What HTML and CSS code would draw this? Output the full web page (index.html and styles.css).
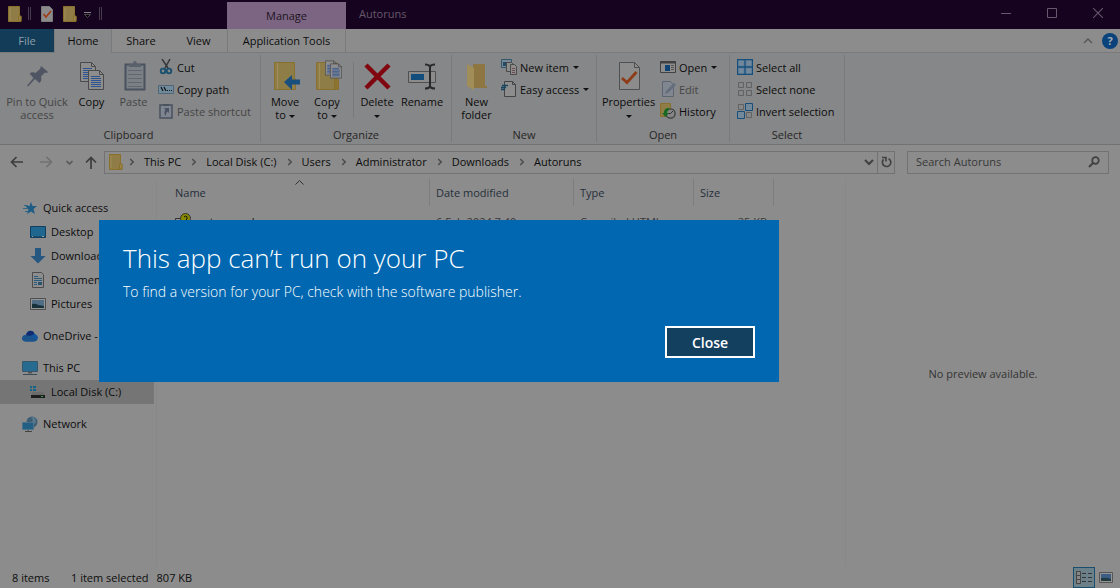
FILE: index.html
```html
<!DOCTYPE html>
<html lang="en">
<head>
<meta charset="utf-8">
<meta name="viewport" content="width=device-width, initial-scale=1">
<title>Autoruns</title>
<link rel="stylesheet" href="styles.css">
</head>
<body>
<svg class="defs" width="0" height="0" aria-hidden="true">
  <symbol id="folder" viewBox="0 0 14 16"><path d="M.5.5h11v10h1.500v5h-12.500z" fill="#8f7c46" stroke="#8a712b"/><path d="M10.500 15v-5h2.500v5z" fill="#9a854c" stroke="#8a712b"/><path d="M2 1.500v13" stroke="#a08d59"/></symbol>
  <symbol id="chev" viewBox="0 0 6 8"><path d="M1.200 1l3 3-3 3" fill="none" stroke="#4d4d4d" stroke-width="1.600"/></symbol>
  <symbol id="tri" viewBox="0 0 6 3"><path d="M0 0h6L3 3z" fill="#111"/></symbol>
  <symbol id="page" viewBox="0 0 16 20"><path d="M.5.5h11l4 4v15H.5z" fill="#8d8d8d" stroke="#4a4a4a"/><path d="M11.500.5v4h4" fill="none" stroke="#4a4a4a"/><path d="M3 6.500h9M3 8.500h10M3 10.500h10M3 12.500h10M3 14.500h10M3 16.500h10" stroke="#2c5290"/></symbol>
</svg>

<header class="titlebar">
  <div class="quick">
    <svg width="14" height="16"><use href="#folder"/></svg>
    <span class="grip"></span>
    <svg class="quick-props" width="12" height="16" viewBox="0 0 12 16"><path d="M.5.5h8l3 3v12H.5z" fill="#8b8b8b" stroke="#7b7b7b"/><path d="M2.500 8l2.500 3 5-6" fill="none" stroke="#a03c16" stroke-width="1.700"/></svg>
    <svg width="14" height="16"><use href="#folder"/></svg>
    <svg class="quick-more" width="7" height="6" viewBox="0 0 7 6"><path d="M0 .5h7" stroke="#858585"/><path d="M.5 2.500h6l-3 3z" fill="#000" stroke="#777" stroke-width=".6"/></svg>
    <span class="grip"></span>
  </div>
  <div class="manage">Manage</div>
  <h1 class="window-title">Autoruns</h1>
  <div class="window-controls">
    <button class="win" aria-label="Minimize"><svg width="10" height="10"><path d="M0 5.500h10" stroke="#68576c"/></svg></button>
    <button class="win" aria-label="Maximize"><svg width="10" height="10"><path d="M.5.5h9v9h-9z" fill="none" stroke="#68576c"/></svg></button>
    <button class="win" aria-label="Close window"><svg width="10" height="10"><path d="M0 0l10 10M10 0L0 10" stroke="#68576c" stroke-width="1.100"/></svg></button>
  </div>
</header>

<nav class="tabs" aria-label="Ribbon tabs">
  <button class="tab tab-file">File</button>
  <button class="tab tab-home">Home</button>
  <button class="tab tab-share">Share</button>
  <button class="tab tab-view">View</button>
  <button class="tab tab-app">Application Tools</button>
  <div class="tabs-end">
    <button class="bare" aria-label="Collapse ribbon"><svg width="10" height="6"><path d="M1 5l4-4 4 4" fill="none" stroke="#555" stroke-width="1.300"/></svg></button>
    <button class="help" aria-label="Help">?</button>
  </div>
</nav>

<section class="ribbon" aria-label="Home">
  <div class="group g-clipboard">
    <div class="tools">
      <button class="big b-pin off"><svg width="32" height="32"><path d="M20 6l7 6-1 1-2-.5-4 4c1 3 0 5-1.500 6.500l-4.500-4-6.500 7-1.500.5.500-1.500 6-7-4-4.500c2-1.500 4-1.500 6-.5l4.500-4z" fill="#4f5562"/></svg>Pin to Quick access</button>
      <button class="big b-copy"><svg width="32" height="32"><use href="#page" x="4" y="2" width="16" height="20"/><use href="#page" x="12" y="10" width="16" height="20"/></svg>Copy</button>
      <button class="big b-paste off"><svg width="32" height="32"><path d="M7.500 4.500h19v25h-19z" fill="#7b8087" stroke="#4a515f" stroke-width="2"/><path d="M10 10.500h14M10 14.500h14M10 18.500h14M10 22.500h14M10 26.500h14" stroke="#62676f"/><path d="M11 7V4h4c0-4 4-4 4 0h4v3z" fill="#5a616d"/></svg>Paste</button>
      <div class="small-col">
        <button class="small"><svg width="16" height="16"><path d="M4 0l6 9M12 0L6.500 10" stroke="#34383d" stroke-width="1.500"/><g fill="none" stroke="#18516f" stroke-width="1.800"><circle cx="5" cy="12" r="2.300"/><circle cx="11" cy="12" r="2.300"/></g></svg>Cut</button>
        <button class="small"><svg width="16" height="16"><path d="M.5 4.500h15v8H.5z" fill="#708b9c" stroke="#536575"/><path d="M3 6l2 4M6 6l2 4M9 9.500h1M11 9.500h1M13 9.500h1" stroke="#111" stroke-width="1.200"/></svg>Copy path</button>
        <button class="small off"><svg width="16" height="16"><path d="M2 2h12v13H2z" fill="#7f858e" stroke="#4a515f" stroke-width="1.500"/><path d="M5 3V1h6v2z" fill="#4a515f"/><path d="M6 5h5v5L9.500 8.500C8 10 8 11 8 13c-2-2-2-4-.5-6.500z" fill="#495265"/></svg>Paste shortcut</button>
      </div>
    </div>
    <h2 class="group-name">Clipboard</h2>
  </div>
  <div class="group g-organize">
    <div class="tools">
      <button class="big b-move"><svg width="32" height="32"><path d="M5.500 2.500h20v27h-20z" fill="#8f7d48" stroke="#89702c"/><path d="M8.500 3v26" stroke="#a08d59"/><path d="M22.500 19h4v10.500h-4z" fill="#927f49" stroke="#89702c"/><path d="M15 22l8-7v4.500h8v5h-8V30z" fill="#184f7c"/></svg><span>Move<br>to <svg width="6" height="3"><use href="#tri"/></svg></span></button>
      <button class="big b-move"><svg width="32" height="32"><path d="M5.500 2.500h20v27h-20z" fill="#8f7d48" stroke="#89702c"/><path d="M8.500 3v26" stroke="#a08d59"/><path d="M23.500 19h4v10.500h-4z" fill="#8c7430" stroke="#89702c"/><use href="#page" x="14" y="0" width="12" height="16"/><use href="#page" x="19" y="3" width="12" height="16"/></svg><span>Copy<br>to <svg width="6" height="3"><use href="#tri"/></svg></span></button>
      <span class="rule"></span>
      <button class="big b-move"><svg width="32" height="32"><path d="M5 5l23 23M28 5L5 28" stroke="#80060f" stroke-width="4.500"/></svg><span>Delete<br><svg width="6" height="3"><use href="#tri"/></svg></span></button>
      <button class="big b-rename"><svg width="32" height="32"><path d="M2.500 11.500h27v11h-27z" fill="#8b8b8b" stroke="#505050"/><path d="M5 14h13v6H5z" fill="#124d7c"/><path d="M24 5v23M19 4.500q4 0 5 2q1-2 5-2M19 28.500q4 0 5-2q1 2 5 2" fill="none" stroke="#292929" stroke-width="2"/></svg>Rename</button>
    </div>
    <h2 class="group-name">Organize</h2>
  </div>
  <div class="group g-new">
    <div class="tools">
      <button class="big b-new"><svg width="32" height="32"><path d="M12 4h12v22h2v2H12z" fill="#8d7642"/><path d="M6 4l7 4v22l-7-4z" fill="#a18d58"/></svg>New folder</button>
      <div class="small-col">
        <button class="small"><svg width="16" height="16"><path d="M.5.5h10v8H.5z" fill="#758a96" stroke="#34566a"/><path d="M2 3h4v4H2z" fill="#234a63"/><path d="M5.500 3.500h5l2 2v7h-7z" fill="#8d8d8d" stroke="#4a4a4a"/><path d="M9.500 5.500h4l2 2v8h-6z" fill="#8d8d8d" stroke="#4a4a4a"/><path d="M11 9.500h3M11 11.500h3M11 13.500h3" stroke="#6c4b52"/></svg>New item<svg class="drop" width="6" height="3"><use href="#tri"/></svg></button>
        <button class="small"><svg width="16" height="16"><path d="M3.500.5h8l3 3v12h-11z" fill="#8d8d8d" stroke="#444"/><path d="M11.500.5v3h3" fill="none" stroke="#444"/><path d="M1 4.500h6M0 6.500h5M0 8.500h4" stroke="#154360" stroke-width="1.400"/></svg>Easy access<svg class="drop" width="6" height="3"><use href="#tri"/></svg></button>
      </div>
    </div>
    <h2 class="group-name">New</h2>
  </div>
  <div class="group g-open">
    <div class="tools">
      <button class="big b-props"><svg width="32" height="32"><path d="M6.500 2.500h15l5 5v22h-20z" fill="#8c8c8c" stroke="#505050"/><path d="M21.500 2.500v5h5" fill="none" stroke="#505050"/><path d="M9 18l5 4.500L23.500 12" fill="none" stroke="#8e3b17" stroke-width="2.800"/></svg><span>Properties<br><svg width="6" height="3"><use href="#tri"/></svg></span></button>
      <div class="small-col">
        <button class="small"><svg width="16" height="16"><path d="M.5 2.500h15v11H.5z" fill="#8d8d8d" stroke="#414141"/><path d="M0 3.500h16" stroke="#414141" stroke-width="2"/><path d="M5 6h5v6H5z" fill="#0e4474"/><path d="M11 6.500h3M11 8.500h3M11 10.500h3" stroke="#555"/></svg>Open<svg class="drop" width="6" height="3"><use href="#tri"/></svg></button>
        <button class="small off"><svg width="16" height="16"><path d="M2.500.5h8l3 3v12h-11z" fill="#808791" stroke="#5d6572"/><path d="M5 13l1-3 8-8 2 2-8 8z" fill="#646d7c"/></svg>Edit</button>
        <button class="small"><svg width="16" height="16"><path d="M.5.5h10v13H.5z" fill="#8f7d48" stroke="#89702c"/><circle cx="10.500" cy="10.500" r="4.600" fill="#858585" stroke="#3e3e3e" stroke-width="1.300"/><path d="M10.500 10.500l2.500-2.500M10.500 10.500H8" stroke="#333"/><path d="M2 10h2c0-4 2-5 5-5v2c-2 1-2 2-2 3h2l-3.500 4z" fill="#176922"/></svg>History</button>
      </div>
    </div>
    <h2 class="group-name">Open</h2>
  </div>
  <div class="group g-select">
    <div class="tools">
      <div class="small-col">
        <button class="small"><svg width="16" height="16"><path d="M.5.5h15v15H.5zM8 1v14M1 8h14" fill="#67829a" stroke="#174f7c" stroke-width="1.300"/><path d="M2 2h4v4H2zM10 2h4v4h-4zM2 10h4v4H2zM10 10h4v4h-4z" fill="#73899a"/></svg>Select all</button>
        <button class="small"><svg width="16" height="16"><path d="M1.500 1.500h5v5h-5zM9.500 1.500h5v5h-5zM1.500 9.500h5v5h-5zM9.500 9.500h5v5h-5z" fill="none" stroke="#616161"/></svg>Select none</button>
        <button class="small"><svg width="16" height="16"><path d="M1.500 1.500h5v5h-5zM9.500 9.500h5v5h-5z" fill="none" stroke="#616161"/><path d="M8.500.5h7v7h-7zM.5 8.500h7v7h-7z" fill="#73899a" stroke="#174f7c"/></svg>Invert selection</button>
      </div>
    </div>
    <h2 class="group-name">Select</h2>
  </div>
</section>

<div class="location">
  <div class="history">
    <button class="bare" aria-label="Back"><svg width="13" height="12"><path d="M13 6H1.500M6.500 1L1.500 6l5 5" fill="none" stroke="#3d3d3d" stroke-width="1.700"/></svg></button>
    <button class="bare" aria-label="Forward"><svg width="13" height="12"><path d="M0 6h11.500M6.500 1l5 5-5 5" fill="none" stroke="#717171" stroke-width="1.700"/></svg></button>
    <button class="bare recent" aria-label="Recent locations"><svg width="7" height="5"><path d="M.5 1l3 3 3-3" fill="none" stroke="#555" stroke-width="1.500"/></svg></button>
    <button class="bare" aria-label="Up"><svg width="12" height="13"><path d="M6 13V1.500M1 6.500l5-5 5 5" fill="none" stroke="#3d3d3d" stroke-width="1.700"/></svg></button>
  </div>
  <div class="address">
    <svg width="14" height="16"><use href="#folder"/></svg>
    <svg class="sep sep-first" width="6" height="8"><use href="#chev"/></svg><a href="#">This PC</a>
    <svg class="sep" width="6" height="8"><use href="#chev"/></svg><a href="#">Local Disk (C:)</a>
    <svg class="sep" width="6" height="8"><use href="#chev"/></svg><a href="#">Users</a>
    <svg class="sep" width="6" height="8"><use href="#chev"/></svg><a href="#">Administrator</a>
    <svg class="sep" width="6" height="8"><use href="#chev"/></svg><a href="#">Downloads</a>
    <svg class="sep" width="6" height="8"><use href="#chev"/></svg><a href="#">Autoruns</a>
    <button class="bare address-drop" aria-label="Previous locations"><svg width="10" height="7"><path d="M1 1l4 4 4-4" fill="none" stroke="#404040" stroke-width="2"/></svg></button>
    <button class="bare refresh" aria-label="Refresh"><svg width="11" height="12"><path d="M7.500 2.600A4.200 4.200 0 1 1 2.600 3.400" fill="none" stroke="#404040" stroke-width="1.600"/><path d="M1 1.500h4v4" fill="none" stroke="#404040" stroke-width="1.600"/></svg></button>
  </div>
  <div class="search">
    <input type="search" placeholder="Search Autoruns" aria-label="Search Autoruns">
    <svg width="12" height="12"><circle cx="7.500" cy="4.500" r="3.300" fill="none" stroke="#404040" stroke-width="1.700"/><path d="M5 7L1 11" stroke="#404040" stroke-width="2"/></svg>
  </div>
</div>

<main class="explorer">
  <nav class="tree" aria-label="Folders">
    <div class="branch">
      <a class="node" href="#"><svg width="16" height="16"><path d="M9 2l1.500 4H15l-3.500 3 1.500 5-4-2.500L5 14l1.500-4.500L3.500 6h4z" fill="#1c5c85"/><path d="M2 5.500h4M1 8.500h5M3 11.500h3" stroke="#346986"/></svg>Quick access</a>
      <a class="node leaf" href="#"><svg width="16" height="16"><path d="M.5 2.500h15v11H.5z" fill="#20678f" stroke="#123f5f"/><path d="M1 12.500h14" stroke="#1a4f70"/><path d="M2 12.500h1M12 12.500h2" stroke="#999"/></svg>Desktop</a>
      <a class="node leaf" href="#"><svg width="16" height="16"><path d="M5 0h6v8h4.500L8 15.500.5 8H5z" fill="#265780"/></svg>Downloads</a>
      <a class="node leaf" href="#"><svg width="16" height="16"><path d="M2.500.5h9l2 2v13h-11z" fill="#8d8d8d" stroke="#4b4b4b"/><path d="M4 4.500h4M4 6.500h8M4 8.500h8M4 10.500h3M4 12.500h3" stroke="#285b7d"/><path d="M8 10h4v3H8z" fill="#27536d"/></svg>Documents</a>
      <a class="node leaf" href="#"><svg width="16" height="16"><path d="M.5 2.500h15v11H.5z" fill="#949494" stroke="#4e4e4e"/><path d="M2 4h12v8H2z" fill="#506d86"/><path d="M2 8q4-1 6 1l6 1v2H2z" fill="#17313b"/></svg>Pictures</a>
    </div>
    <div class="branch"><a class="node" href="#"><svg width="16" height="16"><path d="M3.500 13.500C-1 13-1 7 4 7 5 2 11 1 12.500 6c5 1 4 7.500 0 7.500z" fill="#12569c"/><path d="M3 7q4-2 6 1l5 4q-1 1.500-3 1.500H4Q0 13 0 10q1-3 3-3z" fill="#1c548a"/><path d="M4 7C5 2 11 1 12.500 6L8 8z" fill="#102d73"/></svg>OneDrive - Personal</a></div>
    <div class="branch">
      <a class="node" href="#"><svg width="16" height="16"><path d="M.5 1.500h15v10H.5z" fill="#276b91" stroke="#39566a"/><path d="M6 12h4v1.500H6z" fill="#555"/><path d="M1 14.500h14" stroke="#3a4a56"/></svg>This PC</a>
      <a class="node leaf current" href="#" aria-current="page"><svg width="16" height="16"><path d="M0 2h2v2H0zM3 2h3v2H3zM0 5h2v2H0zM3 5h3v2H3z" fill="#116486"/><path d="M3 8h10l1.500 3H1z" fill="#6b6b6b"/><path d="M1 11h14v3H1z" fill="#1d1d1d"/><path d="M11 12.500h2" stroke="#38a148"/></svg>Local Disk (C:)</a>
    </div>
    <div class="branch"><a class="node" href="#"><svg width="16" height="16"><circle cx="10" cy="6" r="5.500" fill="#3c5d74"/><path d="M8 2q4 0 2 4l3 2q2-4-1-7z" fill="#59788a"/><path d="M.5 6.500h11v7H.5z" fill="#225f85" stroke="#4e7188"/><path d="M3 15.500h7M6 14v1" stroke="#444"/></svg>Network</a></div>
  </nav>

  <section class="files" aria-label="Files">
    <table class="list">
      <colgroup><col class="c-name"><col class="c-date"><col class="c-type"><col class="c-size"></colgroup>
      <thead><tr>
        <th scope="col">Name<svg class="sort" width="9" height="5"><path d="M.5 4.500l4-4 4 4" fill="none" stroke="#333"/></svg></th>
        <th scope="col">Date modified</th><th scope="col">Type</th><th scope="col">Size</th>
      </tr></thead>
      <tbody><tr>
        <td class="file-name"><svg width="16" height="16"><path d="M.5 5.500h12v10H.5z" fill="#8d8d8d" stroke="#333"/><circle cx="10.500" cy="5.500" r="5" fill="#8a8a00" stroke="#333"/><path d="M9 4q2-2 3 0t-2 4" fill="none" stroke="#111"/></svg>autoruns.chm</td>
        <td>6 Feb 2024 7:40</td><td>Compiled HTML ...</td><td class="number">35 KB</td>
      </tr></tbody>
    </table>
  </section>
  <aside class="preview">No preview available.</aside>
</main>

<footer class="status">
  <span class="count">8 items</span><span>1 item selected</span><span class="bytes">807 KB</span>
  <button class="view-details" aria-label="Details view"><svg width="16" height="15"><g fill="#888" stroke="#444"><path d="M.5 1.500h4v4h-4zM.5 5.500h4v4h-4zM.5 9.500h4v4h-4z"/></g><path d="M6 3.500h4M12 3.500h4M6 7.500h4M12 7.500h4M6 11.500h4M12 11.500h4" stroke="#333"/></svg></button>
  <button class="bare view-large" aria-label="Large icons view"><svg width="14" height="11"><path d="M.5.5h13v10H.5z" fill="#949494" stroke="#555"/><path d="M2 2h10v7H2z" fill="#3c5d85"/><path d="M2 6q5-1 10 1v2H2z" fill="#203a3f"/></svg></button>
</footer>

<div class="dialog" role="alertdialog" aria-labelledby="dialog-title" aria-describedby="dialog-text">
  <h2 class="dialog-title" id="dialog-title">This app can’t run on your PC</h2>
  <p class="dialog-text" id="dialog-text">To find a version for your PC, check with the software publisher.</p>
  <button class="dialog-close">Close</button>
</div>
</body>
</html>
```
FILE: styles.css
```css
* { box-sizing: border-box; }
body {
  margin: 0;
  min-height: 100vh;
  display: flex;
  flex-direction: column;
  position: relative;
  background: #8c8c8c;
  color: #0c0c0c;
  font: 11px/13px "Open Sans", "Noto Sans", sans-serif;
}
svg { display: block; flex: none; }
.defs { position: absolute; }
button { font: inherit; color: inherit; background: none; border: 0; padding: 0; margin: 0; }
a { color: inherit; text-decoration: none; }
h1, h2, p { margin: 0; font-size: inherit; font-weight: 400; }
.bare { display: flex; align-items: center; justify-content: center; }

.titlebar { display: flex; height: 29px; background: #160320; }
.quick { width: 227px; display: flex; align-items: center; padding: 0 0 2px 8px; }
.grip { width: 3px; height: 13px; border: 1px solid #483c4c; border-width: 0 1px; margin-left: 6px; }
.quick-props { margin: 0 10px; }
.quick-more { margin: 3px 2px 0 7px; }
.manage { width: 119px; margin-top: 2px; padding-top: 7px; text-align: center; background: #7c6583; color: #1c1420; }
.window-title { flex: 1; padding: 7px 13px; color: #655969; }
.window-controls { display: flex; }
.win { width: 46px; display: flex; justify-content: center; align-items: center; padding-bottom: 3px; }
.win:last-child { width: 45px; }

.tabs { display: flex; height: 24px; border-bottom: 1px solid #7a7a7a; }
.tab { height: 23px; }
.tab-file { width: 54px; background: #123c57; color: #8fa0ab; }
.tab-home { width: 58px; height: 24px; padding-bottom: 1px; background: #868788; border: 1px solid #7a7a7a; border-width: 0 1px; }
.tab-share { width: 58px; }
.tab-view { width: 57px; }
.tab-app { width: 119px; border: 1px solid #7a7a7a; border-width: 0 1px; }
.tabs-end { flex: 1; display: flex; justify-content: flex-end; align-items: center; gap: 9px; padding-right: 2px; }
.help { width: 16px; height: 16px; border-radius: 50%; background: #0a427b; color: #a5adb5; font-weight: 700; line-height: 16px; }

.ribbon { display: flex; height: 92px; padding: 2px 0; background: #868788; border-bottom: 1px solid #727272; }
.group { display: flex; flex-direction: column; justify-content: space-between; border-right: 1px solid #797a7b; }
.g-clipboard { width: 261px; padding-right: 3px; }
.g-organize { width: 191px; }
.g-new { width: 145px; }
.g-open { width: 133px; }
.g-select { width: 115px; }
.tools { display: flex; padding-top: 1px; }
.g-organize .tools { padding-left: 3px; }
.g-select .tools { padding-left: 7px; }
.group-name { text-align: center; color: #262626; padding-bottom: 1px; }
.big { display: flex; flex-direction: column; align-items: center; gap: 3px; padding-top: 4px; height: 70px; }
.big span svg { display: inline-block; vertical-align: middle; }
.b-pin { width: 74px; padding-left: 3px; padding-right: 3px; }
.b-copy { width: 35px; }
.b-paste { width: 49px; }
.b-move { width: 42px; }
.b-rename { width: 48px; }
.b-new { width: 49px; }
.b-props { width: 63px; }
.rule { width: 1px; height: 56px; margin: 6px 2px 0 5px; background: #777879; }
.off { color: #454545; }
.small { display: flex; align-items: center; gap: 3px; height: 22px; white-space: nowrap; }
.drop { margin-left: 1px; }

.location { display: flex; align-items: center; height: 34px; padding-right: 11px; }
.history { width: 104px; display: flex; align-items: center; padding-left: 10px; gap: 17px; }
.recent { margin: 0 -5px 0 -4px; }
.address { flex: 1; height: 23px; display: flex; align-items: center; border: 1px solid #727272; padding-left: 4px; }
.address a { padding-bottom: 1px; }
.sep { margin: 0 9px 0 10px; }
.sep-first { margin-left: 6px; }
.address-drop { margin-left: auto; width: 16px; height: 21px; }
.refresh { width: 17px; height: 21px; border-left: 1px solid #727272; }
.search { width: 202px; height: 23px; margin-left: 12px; display: flex; align-items: center; border: 1px solid #727272; padding: 0 8px; }
.search input { flex: 1; min-width: 0; border: 0; padding: 0 0 1px; background: none; font: inherit; color: inherit; outline: 0; }
.search input::placeholder { color: #383838; opacity: 1; }

.explorer { flex: 1; display: flex; }
.tree { width: 157px; padding: 17px 2px 0 0; border-right: 1px solid #888; display: flex; flex-direction: column; gap: 8px; }
.node { display: flex; align-items: center; gap: 5px; height: 24px; padding: 0 0 1px 22px; white-space: nowrap; overflow: hidden; }
.leaf { padding-left: 30px; }
.current { background: #757575; }
.files { flex: 1; padding-left: 12px; }
.list { table-layout: fixed; width: 605px; border-collapse: separate; border-spacing: 0; }
.c-name { width: 261px; }
.c-date { width: 144px; }
.c-type { width: 120px; }
.c-size { width: 80px; }
.list th { position: relative; height: 27px; padding: 0 6px 1px; text-align: left; font-weight: 400; color: #262f3b; border-right: 1px solid #7d7d7d; }
.sort { position: absolute; top: 1px; left: 126px; }
.list td { height: 24px; padding: 6px 7px 0 6px; color: #373737; white-space: nowrap; }
.list .file-name { display: flex; align-items: center; gap: 6px; color: #0c0c0c; }
.list .number { text-align: right; }
.preview { width: 275px; border-left: 1px solid #888; display: flex; align-items: center; justify-content: center; color: #333; }

.status { height: 21px; display: flex; align-items: center; padding: 0 7px 0 12px; }
.count { width: 59px; }
.bytes { margin: 0 auto 0 8px; }
.view-details { width: 22px; height: 21px; border: 1px solid #174f6c; background: #6c808a; display: flex; align-items: center; justify-content: center; }
.view-large { margin-left: 4px; }

.dialog { position: absolute; left: 99px; top: 220px; width: 680px; padding: 24px; display: flex; flex-direction: column; background: #0067b0; color: #fff; }
.dialog-title { font-size: 26px; line-height: 28px; font-weight: 300; }
.dialog-text { margin-top: 10px; font-size: 14px; line-height: 20px; font-weight: 300; }
.dialog-close { align-self: flex-end; width: 90px; height: 32px; margin-top: 24px; border: 2px solid #fff; background: #14405f; font-size: 14px; font-weight: 600; }
```
